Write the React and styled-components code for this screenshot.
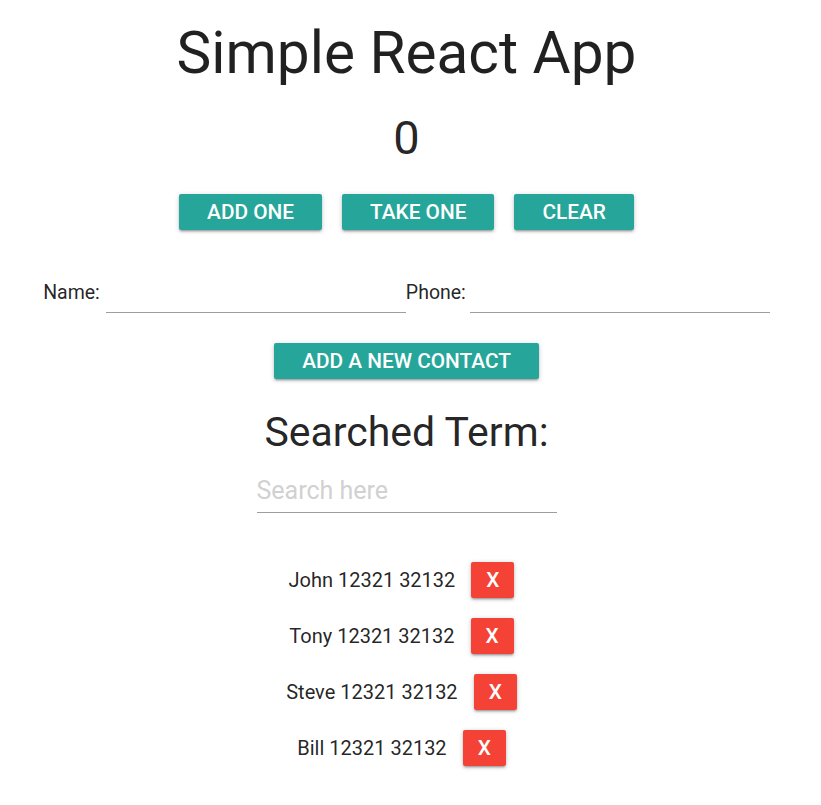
import React, { useState } from "react";
import styled, { createGlobalStyle } from "styled-components";

const GlobalStyle = createGlobalStyle`
  body {
    margin: 0;
    background: #fff;
    font-family: Roboto, "Liberation Sans", sans-serif;
    color: rgba(0, 0, 0, 0.87);
  }
`;

const Page = styled.div`
  padding: 20px 8px 40px 0;
  display: flex;
  flex-direction: column;
  align-items: center;
  text-align: center;
`;

const Title = styled.h1`
  margin: 0;
  font-size: 58.5px;
  font-weight: 400;
  line-height: 66px;
`;

const Count = styled.h2`
  margin: 26px 0 0;
  font-size: 47px;
  font-weight: 400;
  line-height: 52px;
`;

const ButtonRow = styled.div`
  display: flex;
  gap: 20px;
  margin-top: 30px;
`;

const Button = styled.button`
  height: 36px;
  padding: 0 ${(p) => (p.$small ? 15 : 28)}px;
  border: none;
  border-radius: 2px;
  background: ${(p) => (p.$danger ? "#f44336" : "#26a69a")};
  color: #fff;
  font-family: inherit;
  font-size: 20.8px;
  font-weight: 500;
  text-transform: uppercase;
  cursor: pointer;
  box-shadow: 0 2px 2px 0 rgba(0, 0, 0, 0.14), 0 3px 1px -2px rgba(0, 0, 0, 0.12),
    0 1px 5px 0 rgba(0, 0, 0, 0.2);
`;

const FormRow = styled.div`
  display: flex;
  align-items: flex-end;
  margin-top: 38px;
`;

const Label = styled.label`
  font-size: 19.5px;
  line-height: 20px;
  padding-bottom: 10px;
  margin-right: ${(p) => p.$gap}px;
`;

const Input = styled.input`
  width: 300px;
  height: 44px;
  padding: 0;
  border: none;
  border-bottom: 1px solid #9e9e9e;
  outline: none;
  background: transparent;
  font-family: inherit;
  font-size: ${(p) => (p.$big ? 25 : 20)}px;
  color: rgba(0, 0, 0, 0.87);

  &::placeholder {
    color: #d1d1d1;
  }
`;

const Centered = styled.div`
  margin-top: ${(p) => p.$top}px;
`;

const Subtitle = styled.h3`
  margin: 31px 0 0;
  font-size: 41px;
  font-weight: 400;
  line-height: 44px;
`;

const List = styled.ul`
  list-style: none;
  margin: 49px 0 0;
  padding: 0;
  display: flex;
  flex-direction: column;
  gap: 20px;
  align-items: center;
`;

const Item = styled.li`
  display: flex;
  align-items: center;
  gap: 16px;
  padding-right: 10px;
  font-size: 20px;
`;

const contacts = [
  { name: "John", phone: "12321 32132" },
  { name: "Tony", phone: "12321 32132" },
  { name: "Steve", phone: "12321 32132" },
  { name: "Bill", phone: "12321 32132" },
];

export default function App() {
  const [count, setCount] = useState(0);
  const [list, setList] = useState(contacts);

  return (
    <>
      <GlobalStyle />
      <Page>
        <Title>Simple React App</Title>
        <Count>{count}</Count>
        <ButtonRow>
          <Button onClick={() => setCount(count + 1)}>Add One</Button>
          <Button onClick={() => setCount(count - 1)}>Take One</Button>
          <Button onClick={() => setCount(0)}>Clear</Button>
        </ButtonRow>

        <FormRow>
          <Label $gap={6}>Name:</Label>
          <Input />
          <Label $gap={4}>Phone:</Label>
          <Input />
        </FormRow>

        <Centered $top={30}>
          <Button>Add a new contact</Button>
        </Centered>

        <Subtitle>Searched Term:</Subtitle>
        <Centered $top={14}>
          <Input $big placeholder="Search here" />
        </Centered>

        <List>
          {list.map((c, i) => (
            <Item key={i}>
              <span>
                {c.name} {c.phone}
              </span>
              <Button $danger $small onClick={() => setList(list.filter((_, j) => j !== i))}>
                X
              </Button>
            </Item>
          ))}
        </List>
      </Page>
    </>
  );
}
